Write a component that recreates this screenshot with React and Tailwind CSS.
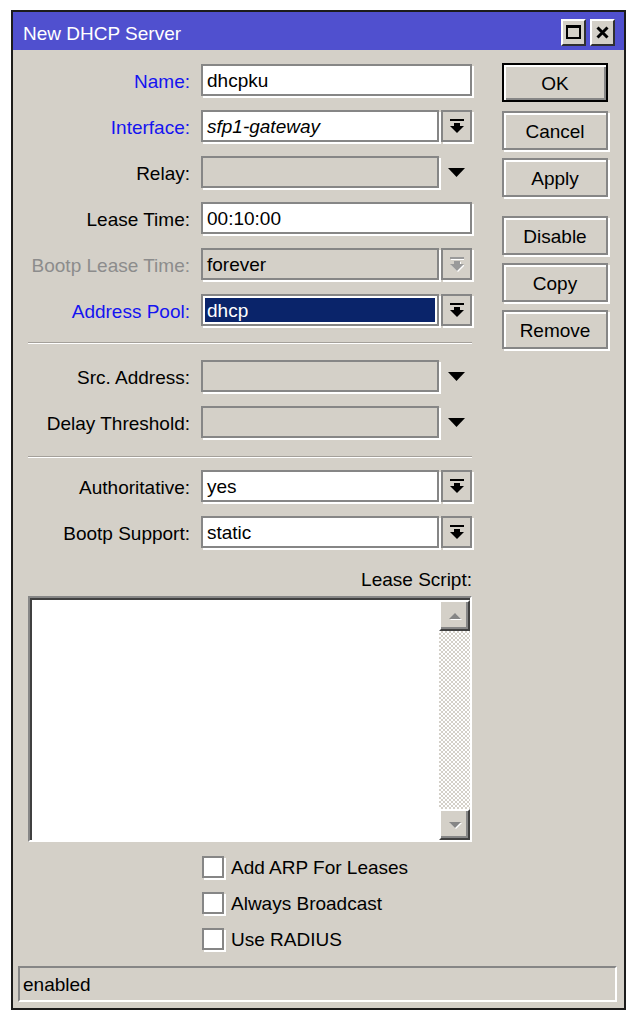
import React from "react";

const FONT = { fontFamily: '"Liberation Sans", Arial, sans-serif' };

function DropIcon({ disabled }) {
  const c = disabled ? "#9a9a9a" : "#000";
  return (
    <svg width="14" height="15" viewBox="0 0 14 15">
      {disabled && (
        <g fill="#fff" transform="translate(1,1)">
          <rect x="0" y="0" width="14" height="2" />
          <rect x="4" y="4" width="6" height="3" />
          <polygon points="0,7 14,7 7,14" />
        </g>
      )}
      <g fill={c}>
        <rect x="0" y="0" width="14" height="2" />
        <rect x="4" y="4" width="6" height="3" />
        <polygon points="0,7 14,7 7,14" />
      </g>
    </svg>
  );
}

function Field({ children, className = "", bg = "bg-white" }) {
  return (
    <div
      className={`h-[32px] border-2 border-[#868686] shadow-[2px_2px_0_#ffffff] ${bg} flex items-center pl-[4px] pt-[3px] text-[19px] text-black whitespace-nowrap overflow-hidden ${className}`}
    >
      {children}
    </div>
  );
}

function DropBtn({ disabled }) {
  return (
    <div className="w-[31px] h-[32px] border-2 border-[#868686] shadow-[2px_2px_0_#ffffff] bg-[#d4d0c8] flex items-center justify-center">
      <DropIcon disabled={disabled} />
    </div>
  );
}

function Row({ label, labelClass = "text-black", children, className = "" }) {
  return (
    <div className={`flex items-center h-[32px] ${className}`}>
      <div className={`w-[162px] pt-[4px] text-right text-[19px] whitespace-nowrap ${labelClass}`}>{label}</div>
      <div className="ml-[11px] w-[271px] flex items-center">{children}</div>
    </div>
  );
}

function Separator({ className = "" }) {
  return <div className={`h-[2px] w-[444px] border-t border-[#a4a09a] border-b border-b-white ${className}`} />;
}

function Button({ children, def, className = "" }) {
  return (
    <div
      className={`w-[106px] h-[39px] flex items-center justify-center pt-[3px] text-[19px] text-black bg-[#d4d0c8] ${
        def
          ? "border-2 border-black shadow-[inset_2px_2px_0_#ffffff,inset_-2px_-2px_0_#868686]"
          : "border-2 border-[#868686] shadow-[inset_2px_2px_0_#ffffff,2px_2px_0_#ffffff]"
      } ${className}`}
    >
      {children}
    </div>
  );
}

function Check({ label, className = "" }) {
  return (
    <div className={`flex items-center h-[22px] ${className}`}>
      <div className="w-[22px] h-[22px] bg-white border-2 border-[#868686] shadow-[2px_2px_0_#ffffff]" />
      <span className="ml-[7px] pt-[3px] text-[19px] text-black whitespace-nowrap">{label}</span>
    </div>
  );
}

function Triangle() {
  return (
    <div className="w-[31px] h-[32px] flex items-center justify-center">
      <svg width="17" height="9" viewBox="0 0 17 9">
        <polygon points="0,0 17,0 8.5,9" fill="#000" />
      </svg>
    </div>
  );
}

function ScrollBtn({ up }) {
  return (
    <div className="w-[31px] h-[31px] bg-[#d4d0c8] border-t-2 border-l-2 border-t-white border-l-white border-r-2 border-b-2 border-r-[#404040] border-b-[#404040] shadow-[inset_-2px_-2px_0_#868686] flex items-center justify-center">
      <svg width="16" height="10" viewBox="0 0 16 10">
        {up ? (
          <>
            <polygon points="2,8 14,8 8,2" fill="#fff" transform="translate(1,1)" />
            <polygon points="2,8 14,8 8,2" fill="#868686" />
          </>
        ) : (
          <>
            <polygon points="2,2 14,2 8,8" fill="#fff" transform="translate(1,1)" />
            <polygon points="2,2 14,2 8,8" fill="#868686" />
          </>
        )}
      </svg>
    </div>
  );
}

export default function App() {
  return (
    <div className="w-[640px] h-[1024px] bg-white pt-[10px] pl-[11px]" style={FONT}>
      <div className="w-[615px] h-[1000px] border-2 border-[#1c1c1c] bg-[#d4d0c8] flex flex-col">
        {/* Title bar */}
        <div className="h-[38px] bg-[#5050cf] flex items-center pl-[10px] pr-[9px]">
          <div className="text-white text-[19px] flex-1 pt-[7px]">New DHCP Server</div>
          <div className="flex gap-[4px] pt-[2px]">
            <div className="w-[25px] h-[27px] bg-[#d4d0c8] border-2 border-t-white border-l-white border-r-[#303030] border-b-[#303030] flex items-center justify-center">
              <svg width="15" height="14" viewBox="0 0 15 14">
                <rect x="1" y="1" width="13" height="12" fill="none" stroke="#000" strokeWidth="2" />
                <rect x="0" y="0" width="15" height="3" fill="#000" />
              </svg>
            </div>
            <div className="w-[25px] h-[27px] bg-[#d4d0c8] border-2 border-t-white border-l-white border-r-[#303030] border-b-[#303030] flex items-center justify-center">
              <svg width="13" height="13" viewBox="0 0 13 13">
                <path d="M1.5 1.5 L11.5 11.5 M11.5 1.5 L1.5 11.5" stroke="#000" strokeWidth="3" />
              </svg>
            </div>
          </div>
        </div>

        {/* Body */}
        <div className="flex pl-[15px]">
          {/* Left column */}
          <div className="w-[444px] flex flex-col pt-[14px]">
            <div className="flex flex-col gap-[14px]">
              <Row label="Name:" labelClass="text-[#1414f0]">
                <Field className="w-[271px]">dhcpku</Field>
              </Row>
              <Row label="Interface:" labelClass="text-[#1414f0]">
                <Field className="w-[238px]"><span className="italic">sfp1-gateway</span></Field>
                <div className="ml-[2px]"><DropBtn /></div>
              </Row>
              <Row label="Relay:">
                <Field className="w-[238px]" bg="bg-[#d4d0c8]" />
                <div className="ml-[2px]"><Triangle /></div>
              </Row>
              <Row label="Lease Time:">
                <Field className="w-[271px]">00:10:00</Field>
              </Row>
              <Row label="Bootp Lease Time:" labelClass="text-[#8c8c8c]">
                <Field className="w-[238px]" bg="bg-[#d4d0c8]">forever</Field>
                <div className="ml-[2px]"><DropBtn disabled /></div>
              </Row>
              <Row label="Address Pool:" labelClass="text-[#1414f0]">
                <div className="w-[238px] h-[32px] border-2 border-[#868686] shadow-[2px_2px_0_#ffffff] bg-white p-[2px]">
                  <div className="h-full bg-[#0a246a] text-white text-[19px] flex items-center pl-[2px] pt-[3px]">dhcp</div>
                </div>
                <div className="ml-[2px]"><DropBtn /></div>
              </Row>
            </div>

            <Separator className="mt-[16px]" />

            <div className="flex flex-col gap-[14px] mt-[16px]">
              <Row label="Src. Address:">
                <Field className="w-[238px]" bg="bg-[#d4d0c8]" />
                <div className="ml-[2px]"><Triangle /></div>
              </Row>
              <Row label="Delay Threshold:">
                <Field className="w-[238px]" bg="bg-[#d4d0c8]" />
                <div className="ml-[2px]"><Triangle /></div>
              </Row>
            </div>

            <Separator className="mt-[18px]" />

            <div className="flex flex-col gap-[14px] mt-[12px]">
              <Row label="Authoritative:">
                <Field className="w-[238px]">yes</Field>
                <div className="ml-[2px]"><DropBtn /></div>
              </Row>
              <Row label="Bootp Support:">
                <Field className="w-[238px]">static</Field>
                <div className="ml-[2px]"><DropBtn /></div>
              </Row>
            </div>

            <div className="mt-[19px] h-[22px] pt-[2px] text-right text-[19px] leading-[22px] text-black">Lease Script:</div>

            {/* Textarea */}
            <div className="mt-[7px] w-[444px] h-[246px] border-2 border-t-[#868686] border-l-[#868686] border-r-white border-b-white shadow-[inset_2px_2px_0_#404040] bg-white flex justify-end pt-[2px] pl-[2px]">
              <div className="w-[31px] h-full flex flex-col">
                <ScrollBtn up />
                <div className="flex-1 bg-[repeating-conic-gradient(#d4d0c8_0%_25%,#ffffff_0%_50%)] bg-[length:4px_4px]" />
                <ScrollBtn />
              </div>
            </div>

            <div className="ml-[174px] mt-[14px] flex flex-col gap-[14px]">
              <Check label="Add ARP For Leases" />
              <Check label="Always Broadcast" />
              <Check label="Use RADIUS" />
            </div>
          </div>

          {/* Right column */}
          <div className="ml-[30px] pt-[13px] flex flex-col">
            <Button def>OK</Button>
            <Button className="mt-[9px]">Cancel</Button>
            <Button className="mt-[8px]">Apply</Button>
            <Button className="mt-[19px]">Disable</Button>
            <Button className="mt-[8px]">Copy</Button>
            <Button className="mt-[8px]">Remove</Button>
          </div>
        </div>

        {/* Status bar */}
        <div className="mt-auto mb-[6px] ml-[5px] w-[599px] h-[36px] border-2 border-t-[#868686] border-l-[#868686] border-r-white border-b-white flex items-center pl-[3px] pt-[3px] text-[19px] text-black">
          enabled
        </div>
      </div>
    </div>
  );
}
